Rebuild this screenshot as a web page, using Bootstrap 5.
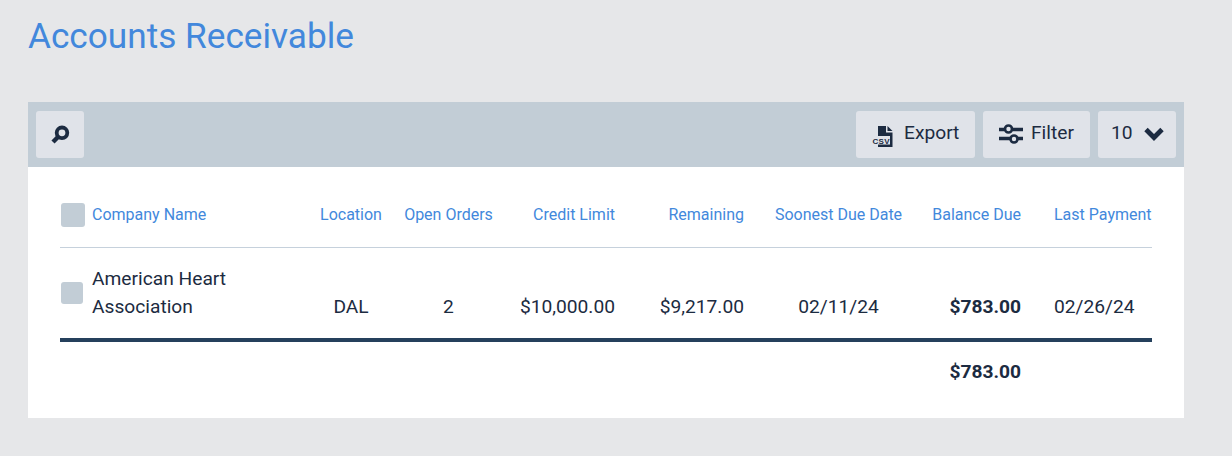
<!DOCTYPE html>
<html lang="en"><head><meta charset="utf-8"><title>Accounts Receivable</title>
<link href="https://cdn.jsdelivr.net/npm/bootstrap@5.3.0/dist/css/bootstrap.min.css" rel="stylesheet">
<style>
body{background:#e6e7e9;font-family:Roboto,"Liberation Sans",sans-serif;color:#1c2b41;height:456px;overflow:hidden}
.ar-page{padding:14px 48px 0 28px}
.ar-title{color:#4288dc;font-size:35.2px;font-weight:400;line-height:44px;margin:0 0 44px}
.ar-bar{background:#c2cdd6;height:65px;padding:9px 8px 0}
.ar-btn{background:#e0e3e9;border:0;border-radius:3px;color:#1c2b41;font-size:19.2px;height:47px;padding:0 0 2px;display:flex;align-items:center}
.ar-btn:hover{background:#e0e3e9;color:#1c2b41}
.ar-search{width:48px;justify-content:center;padding-bottom:0}
.ar-export{width:119px;padding-left:16px}
.ar-filter{width:107px;padding-left:16px}
.ar-size{width:78px;padding-left:13px}
.ar-gap-icon{margin-right:10px;margin-top:6px}
.ar-chev{margin-left:10px}
.ar-body{background:#fff;height:251px;padding:0 32px}
.ar-table{table-layout:fixed;width:1092px;margin:0;color:#1c2b41;font-size:19.2px}
.ar-table th,.ar-table td{padding:0;border:0;background:transparent;color:inherit;box-shadow:none;white-space:nowrap}
.ar-table thead th{color:#4288dc;font-size:16px;font-weight:400;height:80px;vertical-align:middle;border-bottom:1px solid #c6d1dc;padding-top:17px}
.ar-table tbody td{height:93px;line-height:28px;vertical-align:bottom;padding-bottom:17px;border-bottom:4px solid #25405c}
.ar-table tfoot td{height:62px;vertical-align:middle;font-weight:700}
.ar-table .ar-soon{padding-left:2px}
.ar-cell{display:flex;align-items:center}
.ar-check{appearance:none;background:#c2cdd6;border-radius:3px;border:0;margin:0 8px 0 1px;flex:none;display:block}
.ar-check-lg{width:24px;height:24px;margin-right:7px}
.ar-check-sm{width:22px;height:22px;margin-right:9px}
.ar-last{padding-left:33px!important}
</style></head><body>
<div class="ar-page">
<h1 class="ar-title">Accounts Receivable</h1>
<div class="ar-bar d-flex">
  <button class="btn ar-btn ar-search" aria-label="Search"><svg width="20" height="20" viewBox="0 0 20 20"><circle cx="12" cy="7.800" r="5.300" fill="none" stroke="#1c2b41" stroke-width="3.800"/><path d="M8 12 3 17" stroke="#1c2b41" stroke-width="4.400" fill="none"/></svg></button>
  <button class="btn ar-btn ar-export ms-auto"><svg width="22" height="22" viewBox="0 0 22 22" class="ar-gap-icon"><path d="M6 0h8v6.500h6.500V21H6z" fill="#1c2b41"/><path d="M15.500 0 20.500 5h-5z" fill="#1c2b41"/><rect x="0" y="10" width="18" height="8.500" fill="#e0e3e9"/><text x="0.500" y="17.500" font-family="Liberation Sans,sans-serif" font-size="8" font-weight="700" fill="#1c2b41" textLength="17">CSV</text></svg><span>Export</span></button>
  <button class="btn ar-btn ar-filter ms-2"><svg width="24" height="20" viewBox="0 0 24 20" class="me-2"><path d="M0 5.500h24M0 14.500h24" stroke="#1c2b41" stroke-width="3.400"/><circle cx="9.500" cy="5" r="3.500" fill="#e0e3e9" stroke="#1c2b41" stroke-width="2.600"/><circle cx="15" cy="15" r="3.500" fill="#e0e3e9" stroke="#1c2b41" stroke-width="2.600"/></svg><span>Filter</span></button>
  <button class="btn ar-btn ar-size ms-2"><span>10</span><svg width="22" height="15" viewBox="0 0 22 15" class="ar-chev"><path d="M3 3.500 11 11.500l8-8" fill="none" stroke="#1c2b41" stroke-width="4.800"/></svg></button>
</div>
<div class="ar-body">
<table class="table ar-table">
<colgroup><col style="width:238px"><col style="width:106px"><col style="width:89px"><col style="width:122px"><col style="width:129px"><col style="width:187px"><col style="width:90px"><col style="width:131px"></colgroup>
<thead><tr>
<th><div class="ar-cell"><input type="checkbox" class="ar-check ar-check-lg" aria-label="Select all"><span>Company Name</span></div></th>
<th class="text-center">Location</th><th class="text-center">Open Orders</th><th class="text-end">Credit Limit</th><th class="text-end">Remaining</th><th class="text-center ar-soon">Soonest Due Date</th><th class="text-end">Balance Due</th><th class="ar-last">Last Payment</th>
</tr></thead>
<tbody><tr>
<td><div class="ar-cell"><input type="checkbox" class="ar-check ar-check-sm" aria-label="Select row"><span>American Heart<br>Association</span></div></td>
<td class="text-center">DAL</td><td class="text-center">2</td><td class="text-end">$10,000.00</td><td class="text-end">$9,217.00</td><td class="text-center ar-soon">02/11/24</td><td class="text-end fw-bold">$783.00</td><td class="ar-last">02/26/24</td>
</tr></tbody>
<tfoot><tr><td colspan="6"></td><td class="text-end">$783.00</td><td></td></tr></tfoot>
</table>
</div>
</div>
</body></html>
